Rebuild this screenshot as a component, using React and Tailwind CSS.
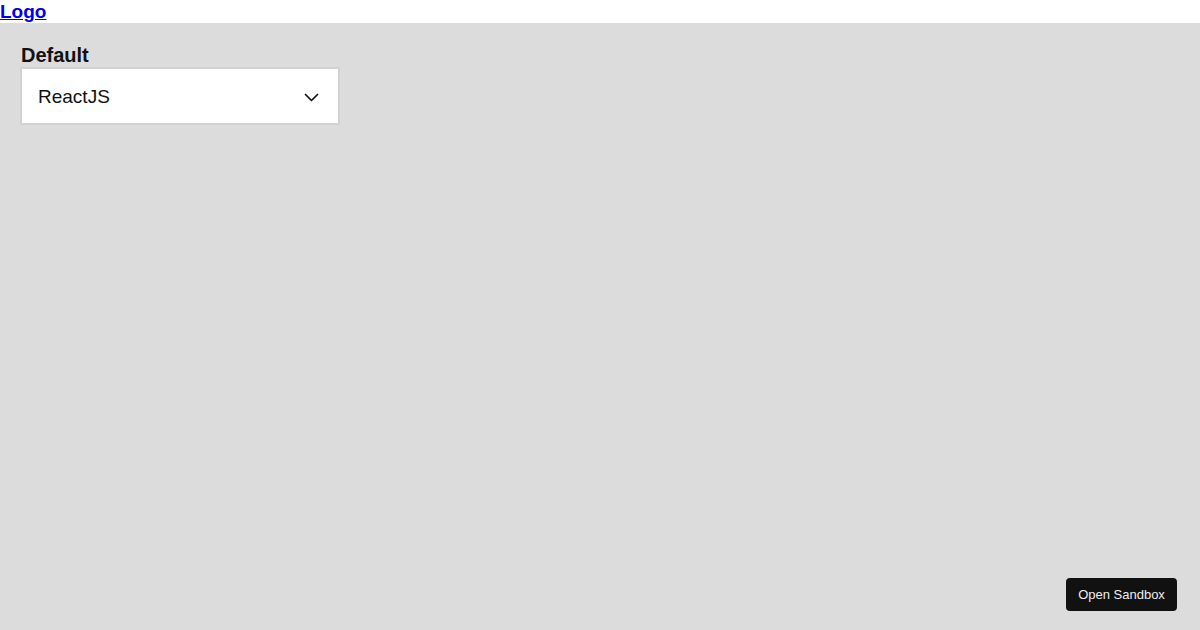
export default function App() {
  return (
    <div className="min-h-screen flex flex-col font-['Liberation_Sans',Arial,sans-serif]">
      <header className="bg-white h-[23px]">
        <a href="#" className="text-[19px] leading-[23px] font-bold text-[#0000ee] underline">
          Logo
        </a>
      </header>
      <main className="flex-1 bg-[#dcdcdc] px-[20px] pt-[20px] relative">
        <div className="w-[320px]">
          <label className="block text-[20px] leading-[24px] font-bold text-[#111] pl-[1px]">Default</label>
          <div className="h-[58px] bg-white border-2 border-[#d2d2d2] flex items-center justify-between pl-[16px] pr-[19px]">
            <span className="text-[19px] text-[#111] pt-[2px]">ReactJS</span>
            <svg width="15" height="9" viewBox="0 0 15 9" fill="none" className="mt-[2px]">
              <polyline points="1.5,1.5 7.5,7.5 13.5,1.5" stroke="#111" strokeWidth="1.7" strokeLinecap="round" strokeLinejoin="round" />
            </svg>
          </div>
        </div>
        <button className="absolute right-[23px] bottom-[19px] w-[111px] h-[33px] bg-[#111] text-[#eee] text-[13px] rounded-[4px]">
          Open Sandbox
        </button>
      </main>
    </div>
  );
}
